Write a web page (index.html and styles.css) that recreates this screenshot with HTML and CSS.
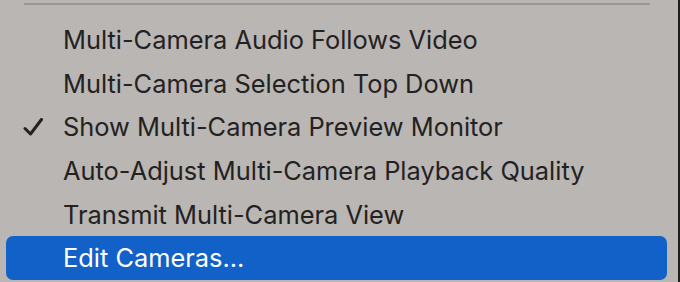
FILE: index.html
```html
<!DOCTYPE html>
<html lang="en">
<head>
    <meta charset="UTF-8">
    <title>View Menu</title>
    <link rel="stylesheet" href="styles.css">
</head>
<body>
    <div class="menu">
        <div class="separator"></div>
        <ul class="items">
            <li class="item"><span class="check"></span>Multi-Camera Audio Follows Video</li>
            <li class="item"><span class="check"></span>Multi-Camera Selection Top Down</li>
            <li class="item checked">
                <span class="check">
                    <svg width="20" height="18" viewBox="0 0 20 18"><path d="M2 10.5 L7.5 16 L18.5 1.5" fill="none" stroke="#222" stroke-width="3" stroke-linecap="round" stroke-linejoin="round"/></svg>
                </span>Show Multi-Camera Preview Monitor
            </li>
            <li class="item"><span class="check"></span>Auto-Adjust Multi-Camera Playback Quality</li>
            <li class="item"><span class="check"></span>Transmit Multi-Camera View</li>
            <li class="item selected"><span class="check"></span>Edit Cameras...</li>
        </ul>
    </div>
</body>
</html>
```

FILE: styles.css
```css
* { box-sizing: border-box; margin: 0; padding: 0; }
body { background: #bab6b3; font-family: Inter, "Noto Sans", sans-serif; width: 680px; height: 282px; overflow: hidden; }

.menu {
    height: 282px;
    border-right: 2px solid #1e1e1e;
    padding-top: 3px;
}

.separator {
    height: 2px;
    margin: 0 28px 0 24px;
    background: #9b9795;
}

.items {
    list-style: none;
    margin-top: 13px;
    margin-right: 11px;
}

.item {
    display: flex;
    align-items: center;
    height: 43.6px;
    margin-left: 6px;
    padding-left: 17px;
    font-size: 25.4px;
    color: #232222;
    border-radius: 7px;
}

.check {
    width: 40px;
    display: flex;
    align-items: center;
}

.selected {
    background: #1261c8;
    color: #fff;
}
```
